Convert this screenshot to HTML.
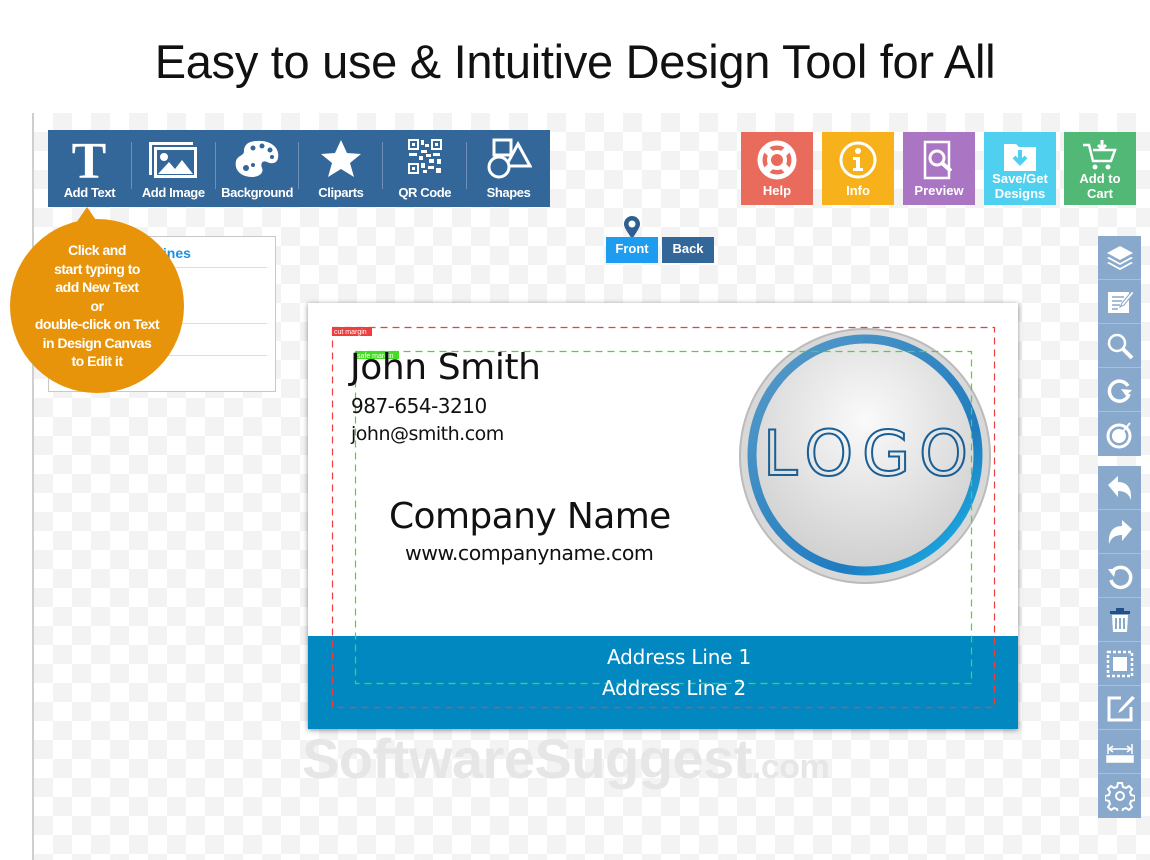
<!DOCTYPE html>
<html><head><meta charset="utf-8"><style>
*{margin:0;padding:0;box-sizing:border-box}
body{width:1150px;height:860px;background:#fff;position:relative;overflow:hidden;font-family:"Liberation Sans","DejaVu Sans",sans-serif}
.abs{position:absolute}
h1{position:absolute;top:34px;left:0;width:1150px;text-align:center;font-weight:normal;font-size:47px;color:#111;letter-spacing:-0.3px}
.bg{left:34px;top:113px;width:1116px;height:747px;
background-color:#fff;
background-image:linear-gradient(45deg,#f3f3f3 25%,transparent 25%,transparent 75%,#f3f3f3 75%),linear-gradient(45deg,#f3f3f3 25%,transparent 25%,transparent 75%,#f3f3f3 75%);
background-size:38px 38px;background-position:0 0,19px 19px}
.vl{left:32px;top:113px;width:2px;height:747px;background:#cfcfcf}
.tb{left:48px;top:130px;width:502px;height:77px;background:#336699;display:flex;align-items:stretch}
.tb .it{flex:1;position:relative;color:#fff;font-size:13px;text-align:center;font-weight:bold}
.tb .it span{position:absolute;bottom:7px;left:0;right:0;letter-spacing:-0.4px}
.tb .sep{width:1px;background:#6f8fb6;margin:12px 0 18px}
.tb svg{position:absolute;left:50%;top:8px;transform:translateX(-50%)}
.sq{top:132px;width:72px;height:73px;color:#fff;font-weight:bold;font-size:13px;text-align:center;line-height:15px}
.sq svg{position:absolute;left:50%;transform:translateX(-50%);top:8px}
.sq span{position:absolute;bottom:7px;left:0;right:0}
.rp{left:1098px;width:43px;background:#88a8cc}
.rp div{height:44px;border-bottom:1px solid #a8c0da;display:flex;align-items:center;justify-content:center}
.panel{left:48px;top:236px;width:228px;height:156px;background:#fff;border:1px solid #c8c8c8}
.bubble{left:10px;top:219px;width:174px;height:174px;border-radius:50%;background:#e8940a;color:#fff;font-weight:bold;font-size:14px;text-align:center;line-height:18.5px;padding-top:22px;letter-spacing:-0.5px}
.card{left:308px;top:303px;width:710px;height:426px;background:#fff;box-shadow:0 1px 5px rgba(0,0,0,.45)}
.band{left:0;top:333px;width:710px;height:93px;background:#0288c1}
.t{position:absolute;color:#111;white-space:nowrap;font-family:"DejaVu Sans","Liberation Sans",sans-serif}
</style></head><body>
<h1>Easy to use &amp; Intuitive Design Tool for All</h1>
<div class="abs bg"></div><div class="abs vl"></div>

<div class="abs tb">
 <div class="it"><svg width="42" height="44" viewBox="0 0 42 44"><text x="21" y="40" text-anchor="middle" font-family="Liberation Serif" font-weight="bold" font-size="52" fill="#fff">T</text></svg><span>Add Text</span></div>
 <div class="sep"></div>
 <div class="it"><svg width="52" height="42" viewBox="0 0 52 42"><path d="M2 4h44v3H5v30H2z" fill="#fff"/><rect x="7" y="9" width="43" height="31" fill="#fff"/><rect x="10" y="12" width="37" height="25" fill="#336699"/><circle cx="17" cy="19" r="4" fill="#fff"/><path d="M11 36l11-12 6 7 7-9 11 14z" fill="#fff"/></svg><span>Add Image</span></div>
 <div class="sep"></div>
 <div class="it"><svg width="48" height="42" viewBox="0 0 48 42"><path d="M24 3C38 2 47 10 45 20c-1 6-7 6-11 4-4-2-7 1-5 6 2 4-2 9-10 9C8 39 1 32 3 23c2-6 8-5 8-10C11 7 15 3 24 3z" fill="#fff"/><circle cx="20" cy="10" r="2.5" fill="#336699"/><circle cx="29" cy="8" r="2.5" fill="#336699"/><circle cx="37" cy="12" r="2.5" fill="#336699"/><circle cx="39" cy="19" r="2" fill="#336699"/><circle cx="13" cy="30" r="3" fill="#336699"/><circle cx="20" cy="27" r="2" fill="#336699"/></svg><span>Background</span></div>
 <div class="sep"></div>
 <div class="it"><svg width="44" height="42" viewBox="0 0 44 42"><path d="M22 2l6 13 14 1-11 9 4 14-13-8-13 8 4-14L2 16l14-1z" fill="#fff"/></svg><span>Cliparts</span></div>
 <div class="sep"></div>
 <div class="it"><svg width="36" height="38" viewBox="0 0 36 38"><g fill="#fff"><rect x="1" y="1" width="11" height="11"/><rect x="24" y="1" width="11" height="11"/><rect x="1" y="25" width="11" height="11"/></g><g fill="#336699"><rect x="3" y="3" width="7" height="7"/><rect x="26" y="3" width="7" height="7"/><rect x="3" y="27" width="7" height="7"/></g><g fill="#fff"><rect x="5" y="5" width="3" height="3"/><rect x="28" y="5" width="3" height="3"/><rect x="5" y="29" width="3" height="3"/><rect x="14" y="2" width="3" height="5"/><rect x="18" y="6" width="4" height="3"/><rect x="14" y="12" width="6" height="3"/><rect x="2" y="15" width="8" height="3"/><rect x="12" y="18" width="4" height="4"/><rect x="19" y="16" width="5" height="3"/><rect x="26" y="15" width="7" height="3"/><rect x="22" y="21" width="5" height="4"/><rect x="30" y="21" width="4" height="5"/><rect x="14" y="25" width="4" height="5"/><rect x="21" y="28" width="6" height="3"/><rect x="29" y="30" width="5" height="5"/><rect x="16" y="32" width="4" height="3"/></g></svg><span>QR Code</span></div>
 <div class="sep"></div>
 <div class="it"><svg width="46" height="42" viewBox="0 0 46 42"><rect x="8" y="2" width="17" height="15" fill="none" stroke="#fff" stroke-width="3"/><path d="M32 6l12 22H20z" fill="#336699" stroke="#fff" stroke-width="3"/><circle cx="13" cy="29" r="10" fill="#336699" stroke="#fff" stroke-width="3"/></svg><span>Shapes</span></div>
</div>

<div class="abs sq" style="left:741px;background:#e96b5c"><svg width="40" height="40" viewBox="0 0 40 40"><circle cx="20" cy="20" r="17" fill="none" stroke="#fff" stroke-width="5"/><circle cx="20" cy="20" r="8" fill="none" stroke="#fff" stroke-width="4"/><g stroke="#fff" stroke-width="7"><path d="M20 3v9M20 28v9M3 20h9M28 20h9" transform="rotate(45 20 20)"/></g></svg><span>Help</span></div>
<div class="abs sq" style="left:822px;background:#f7b11a"><svg width="40" height="40" viewBox="0 0 40 40"><circle cx="20" cy="20" r="17" fill="none" stroke="#fff" stroke-width="3"/><circle cx="20" cy="11" r="3" fill="#fff"/><path d="M15 17h7v11h3v3H15v-3h3v-8h-3z" fill="#fff"/></svg><span>Info</span></div>
<div class="abs sq" style="left:903px;background:#aa75c2"><svg width="40" height="40" viewBox="0 0 40 40"><path d="M6 2h24v36H6z" fill="none" stroke="#fff" stroke-width="2.5"/><circle cx="18" cy="18" r="7" fill="none" stroke="#fff" stroke-width="3"/><path d="M23 23l9 8" stroke="#fff" stroke-width="4"/></svg><span>Preview</span></div>
<div class="abs sq" style="left:984px;background:#4fd0ef;line-height:15px"><svg width="40" height="32" viewBox="0 0 40 32"><path d="M4 4h12l3 3h17v24H4z" fill="#fff"/><path d="M20 10v12M14 17l6 6 6-6" stroke="#4fd0ef" stroke-width="4" fill="none"/></svg><span style="bottom:4px">Save/Get<br>Designs</span></div>
<div class="abs sq" style="left:1064px;background:#52b875"><svg width="40" height="32" viewBox="0 0 40 32"><path d="M3 5h6l4 16h18l4-11H13" fill="none" stroke="#fff" stroke-width="2.5"/><circle cx="15" cy="27" r="2.5" fill="#fff"/><circle cx="28" cy="27" r="2.5" fill="#fff"/><path d="M22 0v8M18 5l4 4 4-4" stroke="#fff" stroke-width="3" fill="none"/></svg><span style="bottom:4px">Add to<br>Cart</span></div>

<div class="abs panel">
 <div style="position:absolute;left:110px;top:8px;color:#1e90e0;font-weight:bold;font-size:14px">lines</div>
 <div style="position:absolute;left:10px;right:8px;top:30px;height:1px;background:#ddd"></div>
 <div style="position:absolute;left:10px;right:8px;top:86px;height:1px;background:#ddd"></div>
 <div style="position:absolute;left:10px;right:8px;top:118px;height:1px;background:#ddd"></div>
</div>
<div class="abs" style="left:76px;top:207px;width:0;height:0;border-left:11px solid transparent;border-right:11px solid transparent;border-bottom:16px solid #e8940a"></div>
<div class="abs bubble">Click and<br>start typing to<br>add New Text<br>or<br>double-click on Text<br>in Design Canvas<br>to Edit it</div>

<svg class="abs" style="left:622px;top:215px" width="20" height="26" viewBox="0 0 20 26"><path d="M10 24C4 15 2 12 2 9a8 8 0 0116 0c0 3-2 6-8 15z" fill="#2f5f92"/><circle cx="10" cy="9" r="3.5" fill="#fff"/></svg>
<div class="abs" style="left:606px;top:237px;width:52px;height:26px;background:#1e9cf0;color:#fff;font-size:13px;font-weight:bold;text-align:center;line-height:24px">Front</div>
<div class="abs" style="left:662px;top:237px;width:52px;height:26px;background:#336699;color:#fff;font-size:13px;font-weight:bold;text-align:center;line-height:24px">Back</div>

<div class="abs card">
 <div class="abs band"></div>
 <svg class="abs" style="left:0;top:0" width="710" height="426">
  <defs><radialGradient id="g1" cx="50%" cy="35%" r="65%"><stop offset="0" stop-color="#fafafa"/><stop offset="1" stop-color="#cfcfcf"/></radialGradient>
  <linearGradient id="g2" x1="0" y1="0" x2="1" y2="1"><stop offset="0" stop-color="#5a9cc8"/><stop offset=".7" stop-color="#1f7cc0"/><stop offset="1" stop-color="#19c0f0"/></linearGradient></defs>
  <ellipse cx="557" cy="153" rx="125" ry="127" fill="#d8d8d8" stroke="#bbb" stroke-width="2"/>
  <ellipse cx="557" cy="152" rx="113" ry="116" fill="url(#g1)" stroke="url(#g2)" stroke-width="9"/>
  <text x="562" y="172" text-anchor="middle" font-family="DejaVu Sans" font-size="62" fill="none" stroke="#1a5f95" stroke-width="2" letter-spacing="9">LOGO</text>
  <rect x="24.5" y="24.5" width="662" height="380" fill="none" stroke="#ee3f3f" stroke-width="1.2" stroke-dasharray="7 5"/>
  <rect x="47.5" y="48.5" width="616" height="332" fill="none" stroke="#44dd22" stroke-width="1.2" stroke-dasharray="7 5"/>
  <rect x="24" y="24" width="40" height="9" fill="#ee3f3f"/><text x="26" y="31" font-size="7" fill="#fff" font-family="Liberation Sans">cut margin</text>
  <rect x="47" y="48" width="44" height="8" fill="#44dd22"/><text x="49" y="55" font-size="7" fill="#fff" font-family="Liberation Sans">safe margin</text>
 </svg>
 <div class="t" style="left:42px;top:44px;font-size:36px;letter-spacing:-0.4px">John Smith</div>
 <div class="t" style="left:43px;top:91px;font-size:20px;letter-spacing:-0.5px">987-654-3210</div>
 <div class="t" style="left:43px;top:120px;font-size:19px;letter-spacing:-0.5px">john@smith.com</div>
 <div class="t" style="left:81px;top:193px;font-size:36px;letter-spacing:-0.6px">Company Name</div>
 <div class="t" style="left:97px;top:238px;font-size:20.5px;letter-spacing:-0.5px">www.companyname.com</div>
 <div class="t" style="left:299px;top:342px;font-size:20px;color:#fff;letter-spacing:-0.2px">Address Line 1</div>
 <div class="t" style="left:294px;top:373px;font-size:20px;color:#fff;letter-spacing:-0.2px">Address Line 2</div>
</div>

<div class="abs" style="left:302px;top:726px;font-size:56px;font-weight:bold;color:#e6e6e6;letter-spacing:-0.5px">SoftwareSuggest<span style="font-size:34px">.com</span></div>

<div class="abs rp" style="top:236px">
 <div><svg width="30" height="30" viewBox="0 0 30 30" fill="#fff"><path d="M15 3l13 7-13 7-13-7z"/><path d="M4 14l11 6 11-6 2 1-13 7-13-7z"/><path d="M4 19l11 6 11-6 2 1-13 7-13-7z"/></svg></div>
 <div><svg width="30" height="30" viewBox="0 0 30 30"><rect x="3" y="5" width="21" height="21" fill="#fff"/><path d="M7 10h12M7 14h10M7 18h8M7 22h6" stroke="#88a8cc" stroke-width="1.5"/><path d="M27 4l-10 12-2 4 4-2 10-12z" fill="#fff" stroke="#88a8cc"/></svg></div>
 <div><svg width="30" height="30" viewBox="0 0 30 30"><circle cx="12" cy="12" r="8" fill="none" stroke="#fff" stroke-width="2.5"/><path d="M18 18l9 9" stroke="#fff" stroke-width="4"/></svg></div>
 <div><svg width="30" height="30" viewBox="0 0 30 30"><path d="M23 11A10 10 0 1 0 24 19" fill="none" stroke="#fff" stroke-width="3.5"/><path d="M27 15l-6 6-5-7z" fill="#fff"/></svg></div>
 <div style="border:0"><svg width="30" height="30" viewBox="0 0 30 30"><circle cx="14" cy="17" r="11" fill="none" stroke="#fff" stroke-width="3"/><circle cx="14" cy="17" r="7" fill="#fff"/><path d="M15 16l10-12" stroke="#fff" stroke-width="2"/></svg></div>
</div>
<div class="abs rp" style="top:466px">
 <div><svg width="30" height="30" viewBox="0 0 30 30"><path d="M3 12l10-9v6c9 0 14 6 13 18-2-6-6-9-13-9v6z" fill="#fff"/></svg></div>
 <div><svg width="30" height="30" viewBox="0 0 30 30"><path d="M27 12l-10-9v6C8 9 3 15 4 27c2-6 6-9 13-9v6z" fill="#fff"/></svg></div>
 <div><svg width="30" height="30" viewBox="0 0 30 30"><path d="M8 10A10 10 0 1 1 6 19" fill="none" stroke="#fff" stroke-width="3.5"/><path d="M3 8l8 0-2 8z" fill="#fff"/></svg></div>
 <div><svg width="30" height="30" viewBox="0 0 30 30"><path d="M5 6h20v3H5z" fill="#224f85"/><rect x="11" y="3" width="8" height="3" fill="#224f85"/><path d="M7 10h16l-1 17H8z" fill="#fff"/><path d="M11 13v11M15 13v11M19 13v11" stroke="#88a8cc" stroke-width="2"/></svg></div>
 <div><svg width="30" height="30" viewBox="0 0 30 30"><rect x="3" y="3" width="24" height="24" fill="none" stroke="#fff" stroke-width="2.5" stroke-dasharray="3 2"/><rect x="8" y="8" width="14" height="14" fill="#fff"/></svg></div>
 <div><svg width="30" height="30" viewBox="0 0 30 30"><path d="M16 5H4v22h22V14" fill="none" stroke="#fff" stroke-width="3"/><path d="M27 3l-12 13-2 4 4-2 13-13z" fill="#fff"/></svg></div>
 <div><svg width="30" height="30" viewBox="0 0 30 30" stroke="#fff" stroke-width="1.5" fill="none"><path d="M3 7v10M27 7v10M4 12h22"/><path d="M4 12l4-3M4 12l4 3M26 12l-4-3M26 12l-4 3"/><rect x="2" y="19" width="26" height="6" fill="#fff"/></svg></div>
 <div style="border:0"><svg width="30" height="30" viewBox="0 0 30 30"><path d="M13 2h4l1 4 3 1 3-2 3 3-2 3 1 3 4 1v4l-4 1-1 3 2 3-3 3-3-2-3 1-1 4h-4l-1-4-3-1-3 2-3-3 2-3-1-3-4-1v-4l4-1 1-3-2-3 3-3 3 2 3-1z" fill="none" stroke="#fff" stroke-width="2"/><circle cx="15" cy="15" r="4" fill="none" stroke="#fff" stroke-width="2"/></svg></div>
</div>
</body></html>
